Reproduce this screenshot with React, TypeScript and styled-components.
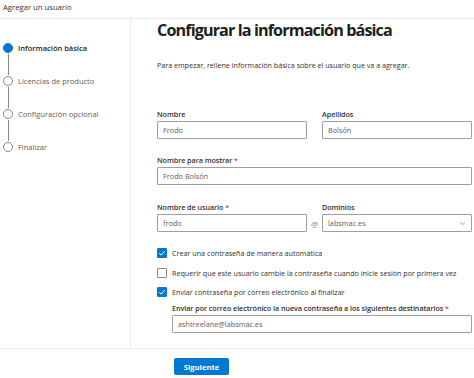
import React from "react";
import styled, { createGlobalStyle } from "styled-components";

const Global = createGlobalStyle`
  html, body { margin: 0; padding: 0; background: #fff; }
  body { font-family: "Open Sans", "Noto Sans", sans-serif; color: #323130; }
  * { box-sizing: border-box; }
`;

const Page = styled.div`
  width: 474px;
  height: 378px;
  display: flex;
  flex-direction: column;
  overflow: hidden;
`;

const Header = styled.div`
  height: 19px;
  border-bottom: 1px solid #edebe9;
  padding: 1px 0 0 3px;
  font-size: 7.7px;
  line-height: 12px;
  color: #323130;
`;

const Body = styled.div`
  flex: 1;
  display: flex;
  min-height: 0;
`;

const Sidebar = styled.div`
  width: 131px;
  border-right: 1px solid #edebe9;
  padding-top: 24px;
  padding-left: 3px;
`;

const Step = styled.div<{ $last?: boolean }>`
  position: relative;
  display: flex;
  height: ${(p) => (p.$last ? "10px" : "33px")};
  align-items: flex-start;
  gap: 5px;
`;

const StepLine = styled.div`
  position: absolute;
  left: 4.5px;
  top: 11px;
  width: 1px;
  height: 21px;
  background: #8a8886;
`;

const Dot = styled.div<{ $active?: boolean }>`
  width: 10px;
  height: 10px;
  border-radius: 50%;
  flex: none;
  border: 1px solid ${(p) => (p.$active ? "#0078d4" : "#8a8886")};
  background: ${(p) => (p.$active ? "#0078d4" : "#fff")};
`;

const StepText = styled.div<{ $active?: boolean }>`
  font-size: 7.5px;
  line-height: 10px;
  font-weight: ${(p) => (p.$active ? 600 : 400)};
  color: ${(p) => (p.$active ? "#201f1e" : "#605e5c")};
`;

const Main = styled.div`
  flex: 1;
  padding-left: 26px;
  padding-right: 2px;
`;

const Title = styled.h1`
  margin: 0;
  font-size: 16.2px;
  line-height: 22px;
  font-weight: 700;
  color: #201f1e;
  letter-spacing: -0.9px;
`;

const Desc = styled.p`
  margin: 19px 0 0;
  font-size: 7.15px;
  line-height: 10px;
  color: #323130;
`;

const Row = styled.div<{ $mt: number }>`
  display: flex;
  align-items: flex-end;
  margin-top: ${(p) => p.$mt}px;
`;

const Field = styled.div<{ $w?: number }>`
  display: flex;
  flex-direction: column;
  gap: 2px;
  width: ${(p) => (p.$w ? `${p.$w}px` : "100%")};
  flex: ${(p) => (p.$w ? "none" : "1")};
`;

const Label = styled.div`
  font-size: 7.2px;
  line-height: 10px;
  font-weight: 600;
  color: #323130;
  white-space: nowrap;
  letter-spacing: -0.05px;
`;

const Req = styled.span`
  color: #a4262c;
  font-weight: 400;
`;

const Input = styled.div`
  height: 18px;
  border: 1px solid #a19f9d;
  border-radius: 1px;
  padding-left: 5px;
  display: flex;
  align-items: center;
  font-size: 7.3px;
  color: #605e5c;
  justify-content: space-between;
  padding-right: 5px;
`;

const At = styled.div`
  width: 15px;
  height: 18px;
  flex: none;
  display: flex;
  align-items: center;
  justify-content: center;
  font-size: 8px;
  color: #8a8886;
`;

const Checks = styled.div`
  margin-top: 16px;
  display: flex;
  flex-direction: column;
  gap: 9.5px;
`;

const CheckRow = styled.div`
  display: flex;
  align-items: center;
  gap: 5px;
  height: 10px;
`;

const Box = styled.div<{ $on?: boolean }>`
  width: 10px;
  height: 10px;
  flex: none;
  border-radius: 1px;
  border: 1px solid ${(p) => (p.$on ? "#0078d4" : "#8a8886")};
  background: ${(p) => (p.$on ? "#0078d4" : "#fff")};
  display: flex;
  align-items: center;
  justify-content: center;
`;

const CheckText = styled.div`
  font-size: 7.2px;
  line-height: 10px;
  color: #323130;
  white-space: nowrap;
`;

const Sub = styled.div`
  margin-top: 6px;
  padding-left: 15px;
`;

const Footer = styled.div`
  height: 30px;
  border-top: 1px solid #edebe9;
  padding: 9px 0 0 174px;
  display: flex;
  align-items: flex-start;
`;

const Button = styled.button`
  width: 55px;
  height: 17px;
  border: none;
  border-radius: 2px;
  background: #0078d4;
  color: #fff;
  font-family: inherit;
  font-size: 7.6px;
  font-weight: 700;
  padding: 0;
`;

const Check = () => (
  <svg width="8" height="8" viewBox="0 0 8 8">
    <path d="M1.2 4.2 L3.2 6 L6.8 2" fill="none" stroke="#fff" strokeWidth="1" />
  </svg>
);

const Chevron = () => (
  <svg width="7" height="5" viewBox="0 0 7 5">
    <path d="M1 1.2 L3.5 3.6 L6 1.2" fill="none" stroke="#8a8886" strokeWidth="0.8" />
  </svg>
);

const steps = ["Información básica", "Licencias de producto", "Configuración opcional", "Finalizar"];

export default function App() {
  return (
    <Page>
      <Global />
      <Header>Agregar un usuario</Header>
      <Body>
        <Sidebar>
          {steps.map((s, i) => (
            <Step key={s} $last={i === steps.length - 1}>
              {i < steps.length - 1 && <StepLine />}
              <Dot $active={i === 0} />
              <StepText $active={i === 0}>{s}</StepText>
            </Step>
          ))}
        </Sidebar>
        <Main>
          <Title>Configurar la información básica</Title>
          <Desc>Para empezar, rellene información básica sobre el usuario que va a agregar.</Desc>
          <Row $mt={39}>
            <Field $w={150}>
              <Label>Nombre</Label>
              <Input>Frodo</Input>
            </Field>
            <At />
            <Field>
              <Label>Apellidos</Label>
              <Input>Bolsón</Input>
            </Field>
          </Row>
          <Row $mt={16}>
            <Field>
              <Label>
                Nombre para mostrar <Req>*</Req>
              </Label>
              <Input>Frodo Bolsón</Input>
            </Field>
          </Row>
          <Row $mt={17}>
            <Field $w={150}>
              <Label>
                Nombre de usuario <Req>*</Req>
              </Label>
              <Input>frodo</Input>
            </Field>
            <At>@</At>
            <Field>
              <Label>Dominios</Label>
              <Input>
                labsmac.es
                <Chevron />
              </Input>
            </Field>
          </Row>
          <Checks>
            <CheckRow>
              <Box $on>
                <Check />
              </Box>
              <CheckText>Crear una contraseña de manera automática</CheckText>
            </CheckRow>
            <CheckRow>
              <Box />
              <CheckText>Requerir que este usuario cambie la contraseña cuando inicie sesión por primera vez</CheckText>
            </CheckRow>
            <CheckRow>
              <Box $on>
                <Check />
              </Box>
              <CheckText>Enviar contraseña por correo electrónico al finalizar</CheckText>
            </CheckRow>
          </Checks>
          <Sub>
            <Field>
              <Label>
                Enviar por correo electrónico la nueva contraseña a los siguientes destinatarios <Req>*</Req>
              </Label>
              <Input>ashtreelane@labsmac.es</Input>
            </Field>
          </Sub>
        </Main>
      </Body>
      <Footer>
        <Button>Siguiente</Button>
      </Footer>
    </Page>
  );
}
